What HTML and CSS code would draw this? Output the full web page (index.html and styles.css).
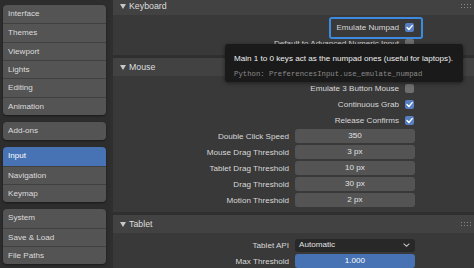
FILE: index.html
```html
<!DOCTYPE html>
<html lang="en">
<head>
    <meta charset="UTF-8">
    <title>Preferences</title>
    <link rel="stylesheet" href="styles.css">
</head>
<body>
<div class="app">
    <nav class="sidebar">
        <div class="group">
            <div class="item">Interface</div>
            <div class="item">Themes</div>
            <div class="item">Viewport</div>
            <div class="item">Lights</div>
            <div class="item">Editing</div>
            <div class="item">Animation</div>
        </div>
        <div class="group">
            <div class="item">Add-ons</div>
        </div>
        <div class="group">
            <div class="item active">Input</div>
            <div class="item">Navigation</div>
            <div class="item">Keymap</div>
        </div>
        <div class="group">
            <div class="item">System</div>
            <div class="item">Save &amp; Load</div>
            <div class="item">File Paths</div>
        </div>
    </nav>

    <main class="content">
        <section class="panel first">
            <div class="panel-head">
                <svg class="tri" width="6" height="5" viewBox="0 0 6 5"><polygon points="0,0 6,0 3,5"/></svg>
                <span>Keyboard</span>
                <svg class="grip" width="10" height="5" viewBox="0 0 10 5"><g><rect x="0" y="0" width="1" height="1"/><rect x="3" y="0" width="1" height="1"/><rect x="6" y="0" width="1" height="1"/><rect x="9" y="0" width="1" height="1"/><rect x="0" y="3" width="1" height="1"/><rect x="3" y="3" width="1" height="1"/><rect x="6" y="3" width="1" height="1"/><rect x="9" y="3" width="1" height="1"/></g></svg>
            </div>
            <div class="panel-body">
                <div class="row check"><span class="hl">Emulate Numpad<i class="cb on"><svg viewBox="0 0 9 9"><polyline points="2,4.6 3.9,6.5 7.2,2.6"/></svg></i></span></div>
                <div class="row check">Default to Advanced Numeric Input<i class="cb"></i></div>
            </div>
        </section>

        <section class="panel">
            <div class="panel-head">
                <svg class="tri" width="6" height="5" viewBox="0 0 6 5"><polygon points="0,0 6,0 3,5"/></svg>
                <span>Mouse</span>
            </div>
            <div class="panel-body">
                <div class="row check">Emulate 3 Button Mouse<i class="cb"></i></div>
                <div class="row check">Continuous Grab<i class="cb on"><svg viewBox="0 0 9 9"><polyline points="2,4.6 3.9,6.5 7.2,2.6"/></svg></i></div>
                <div class="row check">Release Confirms<i class="cb on"><svg viewBox="0 0 9 9"><polyline points="2,4.6 3.9,6.5 7.2,2.6"/></svg></i></div>
                <div class="row prop"><label>Double Click Speed</label><div class="field">350</div></div>
                <div class="row prop"><label>Mouse Drag Threshold</label><div class="field">3 px</div></div>
                <div class="row prop"><label>Tablet Drag Threshold</label><div class="field">10 px</div></div>
                <div class="row prop"><label>Drag Threshold</label><div class="field">30 px</div></div>
                <div class="row prop"><label>Motion Threshold</label><div class="field">2 px</div></div>
            </div>
        </section>

        <section class="panel">
            <div class="panel-head">
                <svg class="tri" width="6" height="5" viewBox="0 0 6 5"><polygon points="0,0 6,0 3,5"/></svg>
                <span>Tablet</span>
                <svg class="grip" width="10" height="5" viewBox="0 0 10 5"><g><rect x="0" y="0" width="1" height="1"/><rect x="3" y="0" width="1" height="1"/><rect x="6" y="0" width="1" height="1"/><rect x="9" y="0" width="1" height="1"/><rect x="0" y="3" width="1" height="1"/><rect x="3" y="3" width="1" height="1"/><rect x="6" y="3" width="1" height="1"/><rect x="9" y="3" width="1" height="1"/></g></svg>
            </div>
            <div class="panel-body">
                <div class="row prop"><label>Tablet API</label><div class="field menu">Automatic<svg viewBox="0 0 7 4"><polyline points="0.6,0.6 3.5,3.2 6.4,0.6"/></svg></div></div>
                <div class="row prop"><label>Max Threshold</label><div class="field blue">1.000</div></div>
            </div>
        </section>
    </main>

    <div class="tooltip">
        <p>Main 1 to 0 keys act as the numpad ones (useful for laptops).</p>
        <p class="py">Python: PreferencesInput.use_emulate_numpad</p>
    </div>
</div>
</body>
</html>
```

FILE: styles.css
```css
body {
    margin: 0;
    background: #2e2e2e;
    font-family: "Liberation Sans", Arial, sans-serif;
    font-size: 8.1px;
    color: #d8d8d8;
    overflow: hidden;
}

.app {
    position: relative;
    display: flex;
    width: 474px;
    height: 268px;
    overflow: hidden;
}

/* left navigation */
.sidebar {
    width: 110px;
    flex: none;
    padding: 5px 4px 0 3px;
    box-sizing: border-box;
    display: flex;
    flex-direction: column;
    gap: 7px;
    background: #2d2d2d;
}

.group {
    display: flex;
    flex-direction: column;
    border-radius: 4px;
    overflow: hidden;
    box-shadow: 0 1px 2px rgba(0,0,0,0.45);
}

.item {
    height: 18.33px;
    line-height: 18px;
    padding-left: 5px;
    background: #545454;
    border-top: 1px solid #404040;
    box-sizing: border-box;
    color: #dcdcdc;
}

.item:first-child {
    border-top: none;
}

.item.active {
    background: #4772b3;
    color: #fff;
}

/* main area */
.content {
    flex: 1;
    padding-left: 3px;
    background: #2f2f2f;
    display: flex;
    flex-direction: column;
    gap: 3px;
}

.panel.first {
    margin-top: -3px;
}

.panel-head {
    height: 18px;
    display: flex;
    align-items: center;
    padding-left: 7px;
    background: #424242;
    font-size: 8.8px;
    color: #dedede;
}

.tri {
    fill: #c8c8c8;
    margin-right: 3px;
}

.grip {
    margin-left: auto;
    margin-right: 3px;
    fill: #8a8a8a;
}

.panel-body {
    background: #393939;
    padding: 4px 0;
    display: flex;
    flex-direction: column;
}

.row {
    height: 16px;
    display: flex;
    align-items: center;
}

.row.check {
    justify-content: flex-end;
    padding-right: 60px;
}

.row.prop {
    display: grid;
    grid-template-columns: 176px 120px;
    column-gap: 6px;
}

.row.prop label {
    text-align: right;
}

.cb {
    width: 9px;
    height: 9px;
    margin-left: 6px;
    border-radius: 2px;
    background: #6e6e6e;
    display: inline-flex;
}

.cb.on {
    background: #5680c2;
}

.cb svg {
    width: 9px;
    height: 9px;
    fill: none;
    stroke: #fff;
    stroke-width: 1.4;
    stroke-linecap: round;
    stroke-linejoin: round;
}

.hl {
    position: relative;
    display: inline-flex;
    align-items: center;
}

.hl::after {
    content: "";
    position: absolute;
    left: -7px;
    right: -9px;
    top: -6px;
    bottom: -7px;
    border: 2px solid #3d8ae0;
    border-radius: 3px;
}

.field {
    height: 14px;
    line-height: 14px;
    border-radius: 3px;
    background: #545454;
    text-align: center;
    color: #e2e2e2;
}

.field.menu {
    background: #282828;
    text-align: left;
    padding: 0 5px 0 4px;
    display: flex;
    align-items: center;
    justify-content: space-between;
    height: 13px;
}

.field.menu svg {
    width: 7px;
    height: 4px;
    fill: none;
    stroke: #bdbdbd;
    stroke-width: 1.1;
}

.field.blue {
    background: #4772b3;
    color: #fff;
}

/* hover tooltip */
.tooltip {
    position: absolute;
    left: 225px;
    top: 44px;
    width: 238px;
    height: 38px;
    box-sizing: border-box;
    padding: 8px 9px 0;
    background: #1a1a1a;
    border-radius: 3px;
    box-shadow: 0 1px 4px rgba(0,0,0,0.5);
    color: #f0f0f0;
}

.tooltip p {
    margin: 0;
    height: 14px;
    line-height: 14px;
    white-space: nowrap;
}

.tooltip .py {
    margin-top: 1px;
    font-family: "Liberation Mono", monospace;
    font-size: 7.3px;
    color: #8a8a8a;
}
```
